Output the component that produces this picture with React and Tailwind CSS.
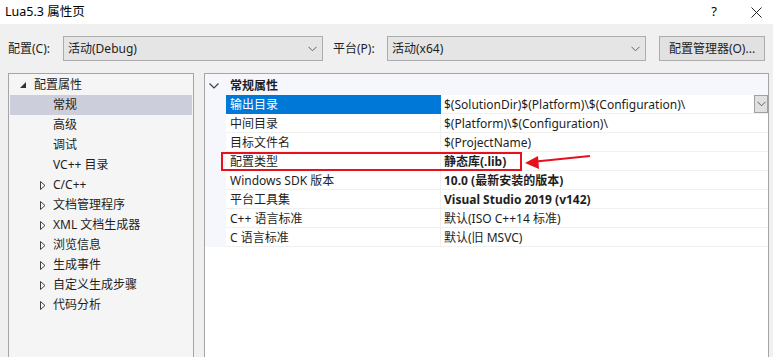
import React from "react";

const font = { fontFamily: '"Noto Sans", "Noto Sans CJK SC", sans-serif' };

const Chevron = ({ className = "" }) => (
  <svg width="9" height="6" viewBox="0 0 9 6" className={className}>
    <path d="M0.5 0.8 L4.5 4.8 L8.5 0.8" fill="none" stroke="#606060" strokeWidth="1" />
  </svg>
);

const treeItems = [
  { label: "常规", selected: true },
  { label: "高级" },
  { label: "调试" },
  { label: "VC++ 目录" },
  { label: "C/C++", expand: true },
  { label: "文档管理程序", expand: true },
  { label: "XML 文档生成器", expand: true },
  { label: "浏览信息", expand: true },
  { label: "生成事件", expand: true },
  { label: "自定义生成步骤", expand: true },
  { label: "代码分析", expand: true },
];

const props = [
  { name: "输出目录", value: "$(SolutionDir)$(Platform)\\$(Configuration)\\", selected: true },
  { name: "中间目录", value: "$(Platform)\\$(Configuration)\\" },
  { name: "目标文件名", value: "$(ProjectName)" },
  { name: "配置类型", value: "静态库(.lib)", bold: true },
  { name: "Windows SDK 版本", value: "10.0 (最新安装的版本)", bold: true },
  { name: "平台工具集", value: "Visual Studio 2019 (v142)", bold: true },
  { name: "C++ 语言标准", value: "默认(ISO C++14 标准)" },
  { name: "C 语言标准", value: "默认(旧 MSVC)" },
];

const OutlineTri = () => (
  <svg width="6" height="9" viewBox="0 0 6 9" className="mr-[7px]">
    <path d="M0.5 0.5 L5 4.5 L0.5 8.5 Z" fill="none" stroke="#404040" strokeWidth="1" />
  </svg>
);

export default function App() {
  return (
    <div className="relative w-[773px] h-[357px] overflow-hidden bg-[#f0f0f0] text-[12px] text-[#1e1e1e]" style={font}>
      {/* title bar */}
      <div className="h-[24px] bg-white flex items-center justify-between pl-[5px] pr-[11px]">
        <span className="text-[12.5px] text-black">Lua5.3 属性页</span>
        <div className="flex items-center gap-[34px] text-black">
          <span className="text-[13px]">?</span>
          <svg width="11" height="11" viewBox="0 0 11 11">
            <path d="M0.5 0.5 L10.5 10.5 M10.5 0.5 L0.5 10.5" stroke="#222" strokeWidth="1" />
          </svg>
        </div>
      </div>

      {/* config row */}
      <div className="mt-[12px] h-[25px] flex items-center pl-[8px]">
        <span className="w-[55px]">配置(C):</span>
        <div className="w-[260px] h-[25px] flex items-center justify-between px-[4px] bg-[#e5e5e5] border border-[#acacac]">
          <span>活动(Debug)</span>
          <Chevron className="mr-[1px]" />
        </div>
        <span className="ml-[10px] w-[54px]">平台(P):</span>
        <div className="w-[259px] h-[25px] flex items-center justify-between px-[4px] bg-[#e5e5e5] border border-[#acacac]">
          <span>活动(x64)</span>
          <Chevron className="mr-[1px]" />
        </div>
        <div className="ml-[13px] w-[106px] h-[25px] flex items-center justify-center bg-[#e1e1e1] border border-[#adadad]">
          配置管理器(O)...
        </div>
      </div>

      {/* body */}
      <div className="mt-[12px] flex pl-[8px] pr-[4px] h-[300px]">
        <div className="w-[186px] bg-[#f5f5f5] border border-[#a5a5a5] p-[1px]">
          <div className="h-[20px] flex items-center pl-[9px]">
            <svg width="8" height="8" viewBox="0 0 8 8" className="mr-[7px] shrink-0">
              <path d="M7 1 L7 7 L1 7 Z" fill="#303030" />
            </svg>
            <span>配置属性</span>
          </div>
          {treeItems.map((it) => (
            <div
              key={it.label}
              className={`h-[20px] flex items-center ${it.selected ? "bg-[#cccedb]" : ""}`}
            >
              <div className="w-[43px] flex justify-end">{it.expand && <OutlineTri />}</div>
              <span>{it.label}</span>
            </div>
          ))}
        </div>

        <div className="ml-[10px] flex-1 bg-white border border-[#a5a5a5]">
          <div className="h-[21px] flex items-center pt-[2px] bg-[#f5f7fc]">
            <svg width="10" height="6" viewBox="0 0 10 6" className="ml-[4px] mr-[11px]">
              <path d="M0.5 0.5 L5 5 L9.5 0.5" fill="none" stroke="#404040" strokeWidth="1.2" />
            </svg>
            <span className="font-bold">常规属性</span>
          </div>
          {props.map((p) => (
            <div key={p.name} className="flex h-[19px]">
              <div className="w-[21px] bg-[#f5f7fc]" />
              <div
                className={`w-[215px] flex items-center pt-[2px] pl-[4px] border-b border-r ${
                  p.selected ? "bg-[#0078d7] text-white border-[#0078d7]" : "border-[#f0f0f0]"
                }`}
              >
                {p.name}
              </div>
              <div className={`flex-1 flex items-center justify-between pl-[3px] border-b border-[#f0f0f0] ${p.bold ? "font-bold" : ""}`}>
                <span className="pt-[2px]">{p.value}</span>
                {p.selected && (
                  <div className="w-[14px] h-[18px] flex items-center justify-center bg-[#e0e0e0] border border-[#a0a0a0]">
                    <Chevron />
                  </div>
                )}
              </div>
            </div>
          ))}
        </div>
      </div>

      {/* annotation */}
      <div className="absolute left-[221px] top-[152px] w-[301px] h-[19px] border-2 border-[#e8101e]" />
      <svg className="absolute left-[520px] top-[148px]" width="75" height="22" viewBox="0 0 75 22">
        <path d="M70 8 L16 13.5" stroke="#e8101e" strokeWidth="2" fill="none" />
        <path d="M5 15 L18 8 L19 21 Z" fill="#e8101e" />
      </svg>
    </div>
  );
}
